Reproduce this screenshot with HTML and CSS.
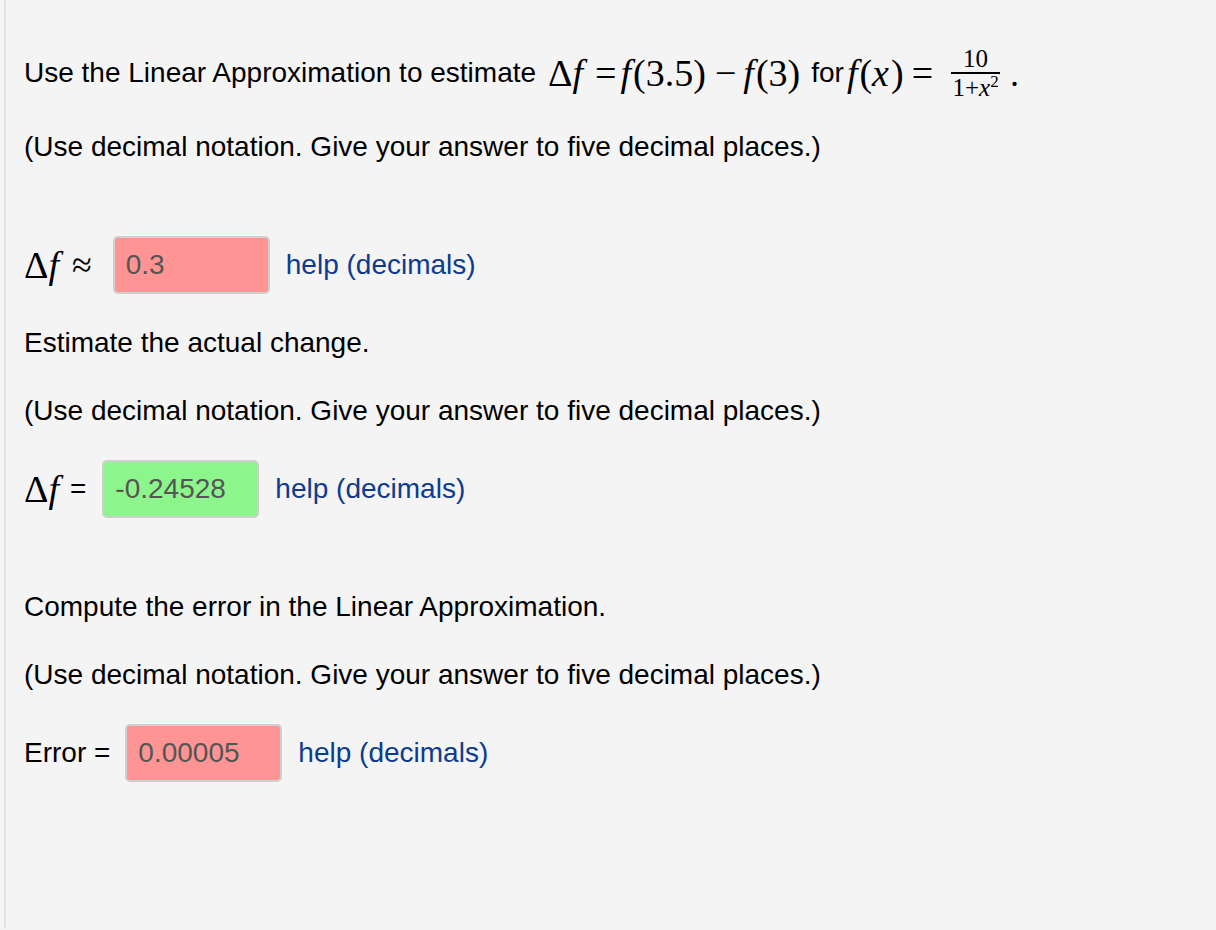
FILE: index.html
```html
<!DOCTYPE html>
<html>
<head>
<meta charset="utf-8">
<link rel="stylesheet" href="styles.css">
</head>
<body>
<div class="page">
  <div class="problem">
    <div class="line first">
      <span class="txt">Use the Linear Approximation to estimate</span>
      <span class="math m1"><span class="up">Δ</span><i>f</i><span class="rel">=</span><i>f</i>(3.5)<span class="bin">−</span><i>f</i>(3)</span>
      <span class="txt for">for</span>
      <span class="math m2"><i>f</i>(<i>x</i>)<span class="rel">=</span></span>
      <span class="frac"><span class="num">10</span><span class="den">1+<i>x</i><sup>2</sup></span></span>
      <span class="period">.</span>
    </div>
    <p class="line note n1">(Use decimal notation. Give your answer to five decimal places.)</p>

    <div class="row r1">
      <span class="math label"><span class="up">Δ</span><i>f</i><span class="approx">≈</span></span>
      <span class="field bad">0.3</span>
      <a class="help" href="#">help (decimals)</a>
    </div>

    <p class="line q q2">Estimate the actual change.</p>
    <p class="line note n2">(Use decimal notation. Give your answer to five decimal places.)</p>

    <div class="row r2">
      <span class="label"><span class="math"><span class="up">Δ</span><i>f</i></span><span class="eq">=</span></span>
      <span class="field good">-0.24528</span>
      <a class="help" href="#">help (decimals)</a>
    </div>

    <p class="line q q3">Compute the error in the Linear Approximation.</p>
    <p class="line note n3">(Use decimal notation. Give your answer to five decimal places.)</p>

    <div class="row r3">
      <span class="label txt">Error =</span>
      <span class="field bad">0.00005</span>
      <a class="help" href="#">help (decimals)</a>
    </div>
  </div>
</div>
</body>
</html>
```

FILE: styles.css
```css
html, body {
  margin: 0;
  padding: 0;
  background: #f4f4f4;
}

body {
  font-family: "Liberation Sans", Arial, sans-serif;
  font-size: 28px;
  color: #000;
}

.page {
  margin-left: 4px;
  border-left: 2px solid #e3e3e3;
  min-height: 928px;
  box-sizing: border-box;
  padding-left: 18px;
}

.problem {
  padding-top: 45px;
  display: flex;
  flex-direction: column;
  align-items: flex-start;
}

.line {
  margin: 0;
  height: 32px;
  line-height: 32px;
  white-space: nowrap;
}

.first {
  height: 56px;
  display: flex;
  align-items: center;
}

.math {
  font-family: "Liberation Serif", "Times New Roman", serif;
  font-size: 38px;
  white-space: nowrap;
}

.math i {
  font-style: italic;
  padding-right: 2px;
}

.m1 {
  margin-left: 12px;
}

.rel {
  margin: 0 4px 0 10px;
}

.bin {
  margin: 0 7px 0 9px;
}

.for {
  margin-left: 11px;
}

.m2 {
  margin-left: 3px;
}

.m2 .rel {
  margin: 0 0 0 8px;
}

.frac {
  display: inline-flex;
  flex-direction: column;
  align-items: center;
  font-family: "Liberation Serif", "Times New Roman", serif;
  font-size: 25px;
  line-height: 26px;
  margin-left: 17px;
  padding: 0 1px;
}

.frac .num {
  border-bottom: 2px solid #000;
  padding: 0 12px 0;
  align-self: stretch;
  text-align: center;
}

.frac .den {
  padding-top: 1px;
}

.frac i {
  font-style: italic;
}

.frac sup {
  font-size: 17px;
  vertical-align: 9px;
  line-height: 0;
}

.period {
  font-family: "Liberation Serif", serif;
  font-size: 36px;
  margin-left: 9px;
  position: relative;
  top: 1px;
}

.n1 { margin-top: 30px; }
.r1 { margin-top: 73px; }
.q2 { margin-top: 33px; }
.n2 { margin-top: 36px; }
.r2 { margin-top: 33px; }
.q3 { margin-top: 73px; }
.n3 { margin-top: 36px; }
.r3 { margin-top: 33px; }

.row {
  display: flex;
  align-items: center;
  height: 58px;
}

.label {
  white-space: nowrap;
  display: flex;
  align-items: center;
}

.r1 .label { margin-right: 21px; }
.r2 .label { margin-right: 16px; }
.r3 .label { margin-right: 15px; }

.approx {
  font-size: 36px;
  margin-left: 11px;
}

.eq {
  font-family: "Liberation Sans", Arial, sans-serif;
  font-size: 28px;
  margin-left: 9px;
}

.field {
  box-sizing: border-box;
  width: 157px;
  height: 58px;
  border: 2px solid #cfcfcf;
  border-radius: 5px;
  padding-left: 11px;
  display: flex;
  align-items: center;
  color: #555;
  font-size: 28px;
}

.bad {
  background: #ff9494;
}

.good {
  background: #8cf58c;
}

.help {
  margin-left: 16px;
  color: #0c3b8f;
  text-decoration: none;
  white-space: nowrap;
}
```
